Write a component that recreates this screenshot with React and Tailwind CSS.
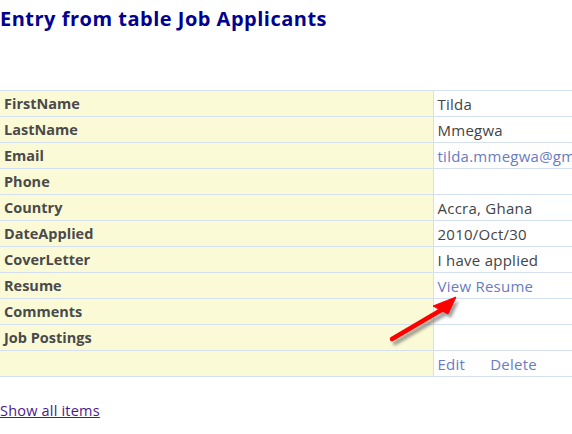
const rows = [
  { label: 'FirstName', value: 'Tilda' },
  { label: 'LastName', value: 'Mmegwa' },
  { label: 'Email', value: 'tilda.mmegwa@gmail.com', link: true },
  { label: 'Phone', value: '' },
  { label: 'Country', value: 'Accra, Ghana' },
  { label: 'DateApplied', value: '2010/Oct/30' },
  { label: 'CoverLetter', value: 'I have applied' },
  { label: 'Resume', value: 'View Resume', link: true },
  { label: 'Comments', value: '' },
  { label: 'Job Postings', value: '' },
];

export default function App() {
  return (
    <div
      className="relative w-[572px] h-[434px] overflow-hidden bg-white"
      style={{ fontFamily: '"Open Sans", sans-serif' }}
    >
      <h1 className="mt-[7px] text-[20px] leading-[24px] font-bold tracking-[0.5px] text-[#000090] whitespace-nowrap">
        Entry from table Job Applicants
      </h1>
      <table className="mt-[59px] w-[700px] border-collapse">
        <tbody>
          {rows.map((r) => (
            <tr key={r.label} className="h-[26px]">
              <td className="w-[433px] border-y border-r border-[#d4e0f0] bg-[#fbfad7] pl-[4px] pt-[1px] pb-0 text-[14.5px] font-bold text-[#4a4a4a] leading-[24px]">
                {r.label}
              </td>
              <td
                className={`border-y border-[#d4e0f0] pl-[4px] pt-[1px] pb-0 text-[15px] tracking-[0.25px] leading-[24px] whitespace-nowrap ${
                  r.link ? 'text-[#6a7bbf]' : 'text-[#444444]'
                }`}
              >
                {r.value}
              </td>
            </tr>
          ))}
          <tr className="h-[26px]">
            <td className="w-[433px] border-y border-r border-[#d4e0f0] bg-[#fbfad7] pl-[4px] py-0 leading-[24px]"></td>
            <td className="border-y border-[#d4e0f0] pl-[4px] pt-[1px] pb-0 text-[15px] tracking-[0.25px] leading-[24px] whitespace-nowrap text-[#6a7bbf]">
              <span>Edit</span>
              <span className="ml-[25px]">Delete</span>
            </td>
          </tr>
        </tbody>
      </table>
      <div className="mt-[24px] text-[14.5px] tracking-[0.2px] leading-[20px]">
        <span className="underline text-[#4b1a8b]">Show all items</span>
      </div>
      <svg className="absolute left-0 top-0" width="572" height="434" viewBox="0 0 572 434">
        <defs>
          <filter id="sh" x="-20%" y="-20%" width="140%" height="140%">
            <feGaussianBlur stdDeviation="1.6" />
          </filter>
        </defs>
        <g transform="translate(3,4)" filter="url(#sh)" opacity="0.55">
          <line x1="392" y1="339" x2="443" y2="309" stroke="#555" strokeWidth="4.5" strokeLinecap="round" />
          <polygon points="456,297 433,306 448,314" fill="#555" />
        </g>
        <line x1="392" y1="339" x2="443" y2="309" stroke="#ff0000" strokeWidth="4.5" strokeLinecap="round" />
        <polygon points="456,297 433,306 448,314" fill="#ff0000" stroke="#ff0000" strokeWidth="1" strokeLinejoin="round" />
      </svg>
    </div>
  );
}
